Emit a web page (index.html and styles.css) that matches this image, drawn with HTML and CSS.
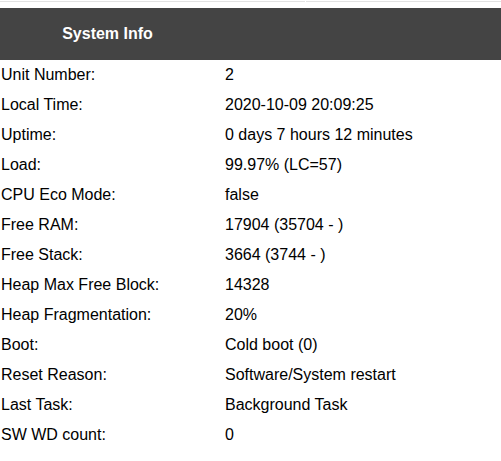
FILE: index.html
```html
<!DOCTYPE html>
<html>
<head>
<meta charset="utf-8">
<link rel="stylesheet" href="styles.css">
</head>
<body>
<div class="prev"><span class="seg a"></span><span class="seg b"></span></div>
<div class="panel">
  <div class="head"><span class="title">System Info</span></div>
  <div class="rows">
    <div class="label">Unit Number:</div><div class="value">2</div>
    <div class="label">Local Time:</div><div class="value">2020-10-09 20:09:25</div>
    <div class="label">Uptime:</div><div class="value">0 days 7 hours 12 minutes</div>
    <div class="label">Load:</div><div class="value">99.97% (LC=57)</div>
    <div class="label">CPU Eco Mode:</div><div class="value">false</div>
    <div class="label">Free RAM:</div><div class="value">17904 (35704 - )</div>
    <div class="label">Free Stack:</div><div class="value">3664 (3744 - )</div>
    <div class="label">Heap Max Free Block:</div><div class="value">14328</div>
    <div class="label">Heap Fragmentation:</div><div class="value">20%</div>
    <div class="label">Boot:</div><div class="value">Cold boot (0)</div>
    <div class="label">Reset Reason:</div><div class="value">Software/System restart</div>
    <div class="label">Last Task:</div><div class="value">Background Task</div>
    <div class="label">SW WD count:</div><div class="value">0</div>
  </div>
</div>
</body>
</html>
```
FILE: styles.css
```css
html, body {
  margin: 0;
  padding: 0;
  background: #fff;
}
body {
  font-family: "Liberation Sans", Arial, sans-serif;
  font-size: 16px;
  color: #000;
}
.prev {
  display: flex;
  gap: 1px;
  margin-top: 1px;
  height: 1px;
}
.seg {
  height: 1px;
  background: #e2e2e2;
}
.seg.a { width: 305px; }
.seg.b { flex: 1; }
.panel {
  margin-top: 6px;
}
.head {
  height: 52px;
  background: #444;
  display: flex;
  align-items: center;
}
.title {
  width: 215px;
  text-align: center;
  color: #fff;
  font-weight: bold;
  font-size: 16px;
}
.rows {
  display: grid;
  grid-template-columns: 225px 1fr;
  grid-auto-rows: 30px;
  line-height: 30px;
}
.label {
  padding-left: 1px;
  white-space: nowrap;
}
.value {
  white-space: nowrap;
}
```
